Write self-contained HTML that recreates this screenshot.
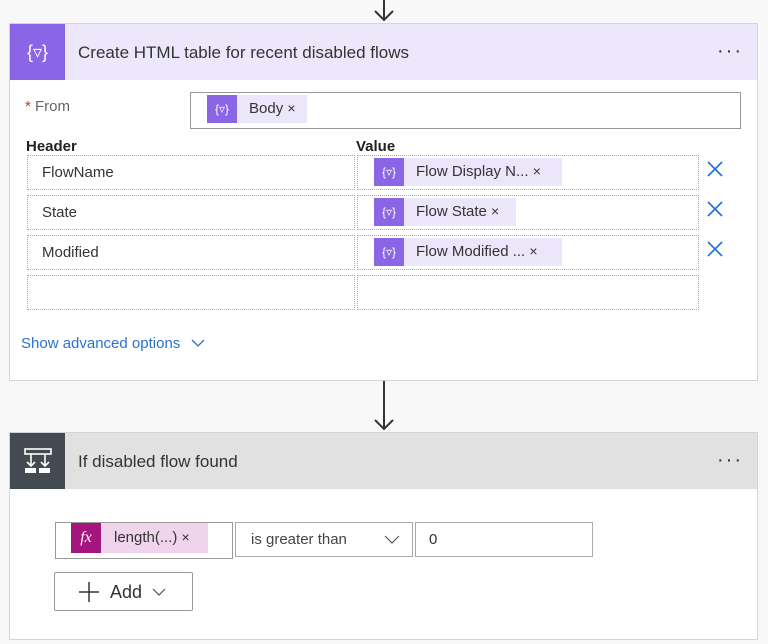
<!DOCTYPE html>
<html><head><style>
body{margin:0;width:768px;height:644px;background:#f8f8f8;font-family:"Liberation Sans",sans-serif;position:relative;overflow:hidden;color:#333}
.a{position:absolute}
.card{position:absolute;left:9px;width:749px;background:#fff;border:1px solid #d4d4d4;box-sizing:border-box}
.hd{position:absolute;left:0;top:0;right:0;height:56px}
.ic{position:absolute;left:0;top:0;width:55px;height:56px}
.title{position:absolute;left:68px;top:19px;font-size:17px;color:#333}
.dots{position:absolute;right:14px;top:17px;font-size:20px;letter-spacing:2px;color:#333;line-height:20px}
.cell{position:absolute;border:1px dotted #aaa;box-sizing:border-box;height:35px;background:#fff}
.tok{position:absolute;height:28px;background:#ece6fb;font-size:15px;color:#333}
.tok .ti{position:absolute;left:0;top:0;width:30px;height:28px;background:#8a66e6;color:#fff;font-size:12px;text-align:center;line-height:28px}
</style></head><body>
<svg class="a" style="left:372px;top:0" width="24" height="22"><path d="M12 0V19M3 11L12 20L21 11" stroke="#333" stroke-width="2" fill="none"/></svg>
<div class="card" style="top:23px;height:358px">
 <div class="hd" style="background:#ede7fb"><div class="ic" style="background:#8a66e6;color:#fff;font-size:18px;text-align:center;line-height:56px">{▿}</div>
 <div class="title">Create HTML table for recent disabled flows</div><div class="dots">···</div></div>
 <div class="a" style="left:15px;top:74px;font-size:15px;color:#666"><span style="color:#c33">*</span> From</div>
 <div class="a" style="left:180px;top:68px;width:551px;height:37px;border:1px solid #999;box-sizing:border-box"></div>
 <div class="tok" style="left:197px;top:71px;width:100px"><div class="ti">{▿}</div><span class="a" style="left:42px;top:5px">Body <span style="font-size:14px">×</span></span></div>
 <div class="a" style="left:16px;top:114px;font-size:15px;font-weight:bold;color:#222">Header</div>
 <div class="a" style="left:346px;top:114px;font-size:15px;font-weight:bold;color:#222">Value</div>
 <div class="cell" style="left:17px;top:131px;width:328px"><span class="a" style="left:14px;top:8px;font-size:15px">FlowName</span></div>
 <div class="cell" style="left:347px;top:131px;width:342px"></div>
 <div class="tok" style="left:364px;top:134px;width:188px"><div class="ti">{▿}</div><span class="a" style="left:42px;top:5px">Flow Display N... <span style="font-size:14px">×</span></span></div>
 <div class="cell" style="left:17px;top:171px;width:328px"><span class="a" style="left:14px;top:8px;font-size:15px">State</span></div>
 <div class="cell" style="left:347px;top:171px;width:342px"></div>
 <div class="tok" style="left:364px;top:174px;width:142px"><div class="ti">{▿}</div><span class="a" style="left:42px;top:5px">Flow State <span style="font-size:14px">×</span></span></div>
 <div class="cell" style="left:17px;top:211px;width:328px"><span class="a" style="left:14px;top:8px;font-size:15px">Modified</span></div>
 <div class="cell" style="left:347px;top:211px;width:342px"></div>
 <div class="tok" style="left:364px;top:214px;width:188px"><div class="ti">{▿}</div><span class="a" style="left:42px;top:5px">Flow Modified ... <span style="font-size:14px">×</span></span></div>
 <div class="cell" style="left:17px;top:251px;width:328px"></div>
 <div class="cell" style="left:347px;top:251px;width:342px"></div>
 <svg class="a" style="left:697px;top:137px" width="16" height="16"><path d="M1 1L15 15M15 1L1 15" stroke="#1f6fd6" stroke-width="1.6"/></svg>
 <svg class="a" style="left:697px;top:177px" width="16" height="16"><path d="M1 1L15 15M15 1L1 15" stroke="#1f6fd6" stroke-width="1.6"/></svg>
 <svg class="a" style="left:697px;top:217px" width="16" height="16"><path d="M1 1L15 15M15 1L1 15" stroke="#1f6fd6" stroke-width="1.6"/></svg>
 <div class="a" style="left:11px;top:311px;font-size:15px;color:#2a73cc">Show advanced options</div>
 <svg class="a" style="left:181px;top:314px" width="14" height="10"><path d="M1 2L7 8L13 2" stroke="#2a73cc" stroke-width="1.3" fill="none"/></svg>
</div>
<svg class="a" style="left:372px;top:381px" width="24" height="50"><path d="M12 0V48M3 39L12 48L21 39" stroke="#333" stroke-width="2" fill="none"/></svg>
<div class="card" style="top:432px;height:208px">
 <div class="hd" style="background:#e1e1e1"><div class="ic" style="background:#444a52">
 <svg width="55" height="56"><g stroke="#fff" stroke-width="1.6" fill="none"><rect x="15" y="16" width="26" height="5"/><path d="M21 21V33M17 29L21 33L25 29M35 21V33M31 29L35 33L39 29"/></g><rect x="15" y="35" width="11" height="5" fill="#fff"/><rect x="29" y="35" width="11" height="5" fill="#fff"/></svg></div>
 <div class="title">If disabled flow found</div><div class="dots">···</div></div>
 <div class="a" style="left:45px;top:89px;width:178px;height:37px;border:1px solid #999;box-sizing:border-box;background:#fff"></div>
 <div class="a" style="left:61px;top:90px;width:137px;height:30px;background:#f0d4ec">
  <div class="a" style="left:0;top:0;width:30px;height:30px;background:#a5157e;color:#fff;font-style:italic;font-family:'Liberation Serif',serif;font-size:16px;text-align:center;line-height:30px">fx</div>
  <span class="a" style="left:43px;top:6px;font-size:15px">length(...) <span style="font-size:14px">×</span></span></div>
 <div class="a" style="left:225px;top:89px;width:178px;height:35px;border:1px solid #aaa;box-sizing:border-box;background:#fff"><span class="a" style="left:15px;top:8px;font-size:15px;color:#444">is greater than</span>
 <svg class="a" style="left:148px;top:12px" width="16" height="10"><path d="M1 1L8 8L15 1" stroke="#555" stroke-width="1.2" fill="none"/></svg></div>
 <div class="a" style="left:405px;top:89px;width:178px;height:35px;border:1px solid #aaa;box-sizing:border-box;background:#fff"><span class="a" style="left:13px;top:8px;font-size:15px">0</span></div>
 <div class="a" style="left:44px;top:139px;width:139px;height:39px;border:1px solid #999;border-radius:2px;box-sizing:border-box;background:#fff">
 <svg class="a" style="left:24px;top:9px" width="20" height="20"><path d="M10 0V20M0 10H20" stroke="#333" stroke-width="1.5"/></svg>
 <span class="a" style="left:55px;top:9px;font-size:18px;color:#333">Add</span>
 <svg class="a" style="left:97px;top:15px" width="14" height="9"><path d="M1 1L7 7L13 1" stroke="#555" stroke-width="1.2" fill="none"/></svg></div>
</div>
</body></html>
